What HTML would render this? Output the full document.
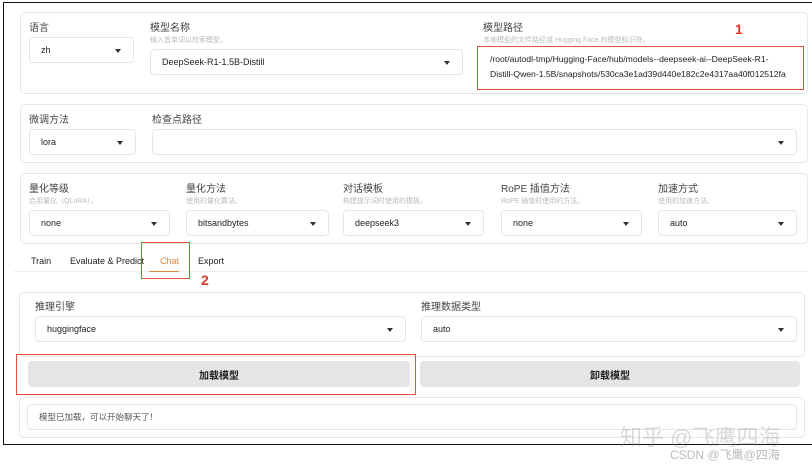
<!DOCTYPE html><html><head><meta charset="utf-8"><style>
*{box-sizing:border-box;margin:0;padding:0}
body{width:812px;height:469px;background:#fff;position:relative;overflow:hidden;font-family:"Liberation Sans","Noto Sans CJK SC",sans-serif;color:#333}
.a{position:absolute}
.frame{left:3px;top:2px;width:809px;height:443px;border-left:1.5px solid #111;border-top:1.5px solid #111;border-bottom:1.5px solid #111}
.panel{position:absolute;border:1px solid #e8e8e8;border-radius:5px;background:#fff}
.lb{position:absolute;font-size:10px;color:#444}
.hn{position:absolute;font-size:7px;color:#bbb}
.sel{position:absolute;border:1px solid #e6e6e6;border-radius:4px;background:#fff;font-size:9px;color:#222;padding-left:11px;display:flex;align-items:center}
.sel.d::after{content:"";position:absolute;right:12px;top:50%;margin-top:-1px;border-left:3px solid transparent;border-right:3px solid transparent;border-top:4px solid #333}
.red{position:absolute;border:1.5px solid #e0533a}
.num{position:absolute;color:#e0352b;font-weight:bold;font-size:14px}
.btn{position:absolute;background:#e5e5e8;border-radius:4px;font-size:10px;font-weight:bold;display:flex;align-items:center;justify-content:center;color:#222}
</style></head><body>
<div class="a frame"></div>
<div class="panel" style="left:20px;top:12px;width:788px;height:82px"></div>
<div class="lb" style="left:29px;top:19px">语言</div>
<div class="sel d" style="left:29px;top:37px;width:105px;height:26px">zh</div>
<div class="lb" style="left:150px;top:19px">模型名称</div>
<div class="hn" style="left:150px;top:35px">输入首单词以检索模型。</div>
<div class="sel d" style="left:150px;top:49px;width:313px;height:26px">DeepSeek-R1-1.5B-Distill</div>
<div class="lb" style="left:483px;top:19px">模型路径</div>
<div class="hn" style="left:483px;top:35px">本地模型的文件路径或 Hugging Face 的模型标识符。</div>
<div class="a" style="left:490px;top:52px;font-size:8.6px;line-height:15px;color:#222">/root/autodl-tmp/Hugging-Face/hub/models--deepseek-ai--DeepSeek-R1-<br>Distill-Qwen-1.5B/snapshots/530ca3e1ad39d440e182c2e4317aa40f012512fa</div>
<div class="red" style="left:477px;top:46px;width:327px;height:44px"></div>
<div class="num" style="left:735px;top:21px">1</div>

<div class="panel" style="left:20px;top:104px;width:788px;height:59px"></div>
<div class="lb" style="left:29px;top:111px">微调方法</div>
<div class="sel d" style="left:29px;top:129px;width:107px;height:26px">lora</div>
<div class="lb" style="left:152px;top:111px">检查点路径</div>
<div class="sel d" style="left:152px;top:129px;width:645px;height:26px"></div>

<div class="panel" style="left:20px;top:173px;width:788px;height:71px"></div>
<div class="lb" style="left:29px;top:180px">量化等级</div><div class="hn" style="left:29px;top:196px">启用量化（QLoRA）。</div>
<div class="sel d" style="left:29px;top:210px;width:141px;height:26px">none</div>
<div class="lb" style="left:186px;top:180px">量化方法</div><div class="hn" style="left:186px;top:196px">使用的量化算法。</div>
<div class="sel d" style="left:186px;top:210px;width:143px;height:26px">bitsandbytes</div>
<div class="lb" style="left:343px;top:180px">对话模板</div><div class="hn" style="left:343px;top:196px">构建提示词时使用的模板。</div>
<div class="sel d" style="left:343px;top:210px;width:141px;height:26px">deepseek3</div>
<div class="lb" style="left:501px;top:180px">RoPE 插值方法</div><div class="hn" style="left:501px;top:196px">RoPE 插值时使用的方法。</div>
<div class="sel d" style="left:501px;top:210px;width:141px;height:26px">none</div>
<div class="lb" style="left:658px;top:180px">加速方式</div><div class="hn" style="left:658px;top:196px">使用的加速方法。</div>
<div class="sel d" style="left:658px;top:210px;width:139px;height:26px">auto</div>

<div class="a" style="left:14px;top:271px;width:794px;border-top:1px solid #eee"></div>
<div class="a" style="left:31px;top:256px;font-size:9px;color:#222">Train</div>
<div class="a" style="left:70px;top:256px;font-size:9px;color:#222">Evaluate &amp; Predict</div>
<div class="a" style="left:160px;top:256px;font-size:9px;color:#e8863a">Chat</div>
<div class="a" style="left:149px;top:271px;width:30px;border-top:1.5px solid #e8863a"></div>
<div class="a" style="left:198px;top:256px;font-size:9px;color:#222">Export</div>
<div class="red" style="left:141px;top:242px;width:49px;height:37px"></div>
<div class="num" style="left:201px;top:272px">2</div>

<div class="panel" style="left:19px;top:292px;width:786px;height:65px"></div>
<div class="lb" style="left:35px;top:298px">推理引擎</div>
<div class="sel d" style="left:35px;top:316px;width:371px;height:26px">huggingface</div>
<div class="lb" style="left:421px;top:298px">推理数据类型</div>
<div class="sel d" style="left:421px;top:316px;width:376px;height:26px">auto</div>

<div class="btn" style="left:28px;top:361px;width:382px;height:26px">加载模型</div>
<div class="btn" style="left:420px;top:361px;width:380px;height:26px">卸载模型</div>
<div class="red" style="left:16px;top:354px;width:400px;height:41px"></div>
<div class="num" style="left:402px;top:400px">3</div>

<div class="panel" style="left:19px;top:397px;width:786px;height:41px"></div>
<div class="sel" style="left:27px;top:404px;width:770px;height:26px;font-size:8.5px;color:#555">模型已加载，可以开始聊天了！</div>
<div class="a" style="left:620px;top:420px;font-size:22px;color:rgba(150,150,150,.35)">知乎 @飞鹰四海</div>
<div class="a" style="left:670px;top:446px;font-size:12px;color:#bbb">CSDN @飞鹰@四海</div>
</body></html>
